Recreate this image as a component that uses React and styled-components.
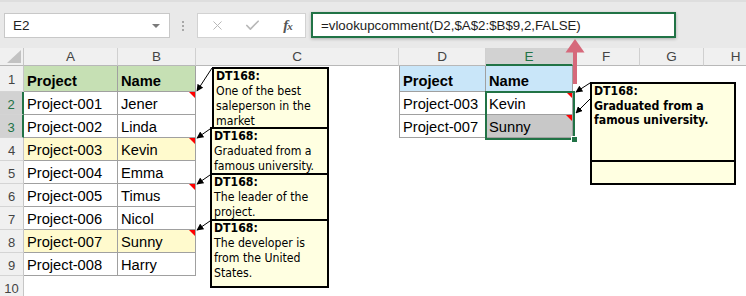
import React from "react";
import styled, { createGlobalStyle, css } from "styled-components";
import { X, Check } from "lucide-react";

const GREEN = "#217346";

const GlobalStyle = createGlobalStyle`
  html, body { margin: 0; padding: 0; background: #fff; overflow: hidden; }
  body { font-family: "Liberation Sans", Arial, sans-serif; }
`;

const Page = styled.div`
  position: relative;
  width: 746px;
  height: 296px;
  overflow: hidden;
  background: #fff;
`;

/* ---------- formula bar ---------- */
const FormulaBar = styled.div`
  display: flex;
  align-items: flex-start;
  height: 48px;
  box-sizing: border-box;
  padding: 11px 0 0 4px;
  background: #e9e9e9;
  border-top: 2px solid #dedede;
`;

const NameBox = styled.div`
  width: 166px;
  height: 25px;
  box-sizing: border-box;
  background: #fff;
  border: 1px solid #c8c8c8;
  display: flex;
  align-items: center;
  justify-content: space-between;
  padding: 0 9px 0 8px;
  font-size: 13.5px;
  color: #222;
`;

const Caret = styled.span`
  width: 0;
  height: 0;
  border-left: 4px solid transparent;
  border-right: 4px solid transparent;
  border-top: 4px solid #7a7a7a;
`;

const Grip = styled.div`
  display: flex;
  flex-direction: column;
  gap: 2px;
  margin: 8px 13px 0 12px;
  span {
    width: 2px;
    height: 2px;
    background: #a8a8a8;
  }
`;

const ButtonBox = styled.div`
  width: 109px;
  height: 25px;
  box-sizing: border-box;
  background: #fff;
  border: 1px solid #d2d2d2;
  display: flex;
  align-items: center;
  padding-left: 2px;
`;

const IconSlot = styled.div`
  width: 35px;
  display: flex;
  justify-content: center;
  align-items: center;
  color: ${(p) => p.$color || "#b8b8b8"};
`;

const Fx = styled.span`
  font-family: "Liberation Serif", "Times New Roman", serif;
  font-style: italic;
  font-weight: bold;
  font-size: 15px;
  color: #555;
  letter-spacing: -1px;
  small {
    font-size: 11px;
  }
`;

const FormulaInput = styled.div`
  margin-left: 5px;
  margin-top: -1px;
  width: 365px;
  height: 26px;
  box-sizing: border-box;
  border: 2px solid ${GREEN};
  background: #fff;
  box-shadow: 0 1px 3px rgba(0, 0, 0, 0.25);
  display: flex;
  align-items: center;
  padding-left: 8px;
  font-size: 13.3px;
  color: #1e1e1e;
  white-space: nowrap;
`;

/* ---------- sheet grid ---------- */
const Sheet = styled.div`
  display: grid;
  grid-template-columns: 24px 94px 78px 203px 87px 87px 67px 64px 64px;
  grid-template-rows: 18px 26px repeat(9, 23px);
`;

const Corner = styled.div`
  background: #f0f0f0;
  border-right: 1px solid #c6c6c6;
  border-bottom: 1px solid #b8b8b8;
  box-sizing: border-box;
  display: flex;
  align-items: flex-end;
  justify-content: flex-end;
  padding: 0 2px 2px 0;
  &::before {
    content: "";
    width: 0;
    height: 0;
    border-left: 14px solid transparent;
    border-bottom: 13px solid #c2c2c2;
  }
`;

const ColHead = styled.div`
  box-sizing: border-box;
  background: ${(p) => (p.$active ? "#d2d2d2" : "#f0f0f0")};
  color: ${(p) => (p.$active ? GREEN : "#444")};
  border-right: 1px solid #d0d0d0;
  border-bottom: ${(p) => (p.$active ? `2px solid ${GREEN}` : "1px solid #b8b8b8")};
  display: flex;
  align-items: center;
  justify-content: center;
  font-size: 13.5px;
  padding-top: ${(p) => (p.$active ? "1px" : "0")};
`;

const RowHead = styled.div`
  box-sizing: border-box;
  background: ${(p) => (p.$active ? "#d2d2d2" : "#f0f0f0")};
  color: ${(p) => (p.$active ? GREEN : "#444")};
  border-right: ${(p) => (p.$active ? `2px solid ${GREEN}` : "1px solid #c6c6c6")};
  border-bottom: 1px solid #d4d4d4;
  display: flex;
  align-items: center;
  justify-content: center;
  font-size: 13px;
  padding-top: 2px;
`;

const TONES = {
  green: "#c6e0b4",
  blue: "#c9e6f9",
  yellow: "#fffacd",
  gray: "#c8c8c8",
  none: "#fff",
};

const Cell = styled.div`
  position: relative;
  box-sizing: border-box;
  background: ${(p) => TONES[p.$tone || "none"]};
  display: flex;
  align-items: flex-end;
  padding: 0 3px 1px 3px;
  font-size: 14.7px;
  line-height: 17px;
  color: #000;
  font-weight: ${(p) => (p.$bold ? "bold" : "normal")};
  white-space: nowrap;
  ${(p) =>
    p.$table &&
    css`
      border-right: 1px solid #a0a0a0;
      border-bottom: 1px solid #a0a0a0;
    `}
  ${(p) =>
    p.$left &&
    css`
      border-left: 1px solid #a0a0a0;
    `}
  ${(p) =>
    p.$note &&
    css`
      &::after {
        content: "";
        position: absolute;
        top: 0;
        right: 0;
        width: 0;
        height: 0;
        border-left: 6px solid transparent;
        border-top: 6px solid #ff0000;
      }
    `}
`;

/* ---------- overlays ---------- */
const Selection = styled.div`
  position: absolute;
  left: 485px;
  top: 91px;
  width: 90px;
  height: 49px;
  box-sizing: border-box;
  border: 2px solid ${GREEN};
  pointer-events: none;
  &::after {
    content: "";
    position: absolute;
    right: -5px;
    bottom: -5px;
    width: 5px;
    height: 5px;
    background: ${GREEN};
    border: 1px solid #fff;
  }
`;

const Note = styled.div`
  position: absolute;
  left: ${(p) => p.$x}px;
  top: ${(p) => p.$y}px;
  width: ${(p) => p.$w}px;
  height: ${(p) => p.$h}px;
  box-sizing: border-box;
  background: #ffffe1;
  border: 2px solid #000;
  display: flex;
  flex-direction: column;
  padding: 0 0 0 2px;
  font-family: "DejaVu Sans Condensed", "DejaVu Sans", Tahoma, sans-serif;
  font-stretch: condensed;
  font-size: 12.2px;
  line-height: ${(p) => (p.$lh ? p.$lh : 15)}px;
  color: #000;
`;

const NoteBody = styled.div`
  flex: 1;
  font-weight: ${(p) => (p.$bold ? "bold" : "normal")};
`;

const NoteLine = styled.div`
  white-space: nowrap;
  font-weight: ${(p) => (p.$bold ? "bold" : "inherit")};
`;

const NoteFooter = styled.div`
  height: 21px;
  margin-left: -2px;
  border-top: 2px solid #000;
`;

const Overlay = styled.svg`
  position: absolute;
  left: 0;
  top: 0;
  pointer-events: none;
`;

/* ---------- data ---------- */
const COLS = ["A", "B", "C", "D", "E", "F", "G", "H"];

const tableA = [
  ["Project", "Name"],
  ["Project-001", "Jener"],
  ["Project-002", "Linda"],
  ["Project-003", "Kevin"],
  ["Project-004", "Emma"],
  ["Project-005", "Timus"],
  ["Project-006", "Nicol"],
  ["Project-007", "Sunny"],
  ["Project-008", "Harry"],
];

const tableD = [
  ["Project", "Name"],
  ["Project-003", "Kevin"],
  ["Project-007", "Sunny"],
];

function cellProps(row, col) {
  if ((col === "A" || col === "B") && row <= 9) {
    const text = tableA[row - 1][col === "A" ? 0 : 1];
    let tone = "none";
    if (row === 1) tone = "green";
    else if (row === 4 || row === 8) tone = "yellow";
    return {
      text,
      $table: true,
      $tone: tone,
      $bold: row === 1,
      $note: col === "B" && [2, 4, 6, 8].includes(row),
    };
  }
  if ((col === "D" || col === "E") && row <= 3) {
    const text = tableD[row - 1][col === "D" ? 0 : 1];
    let tone = "none";
    if (row === 1) tone = "blue";
    else if (row === 3 && col === "E") tone = "gray";
    return {
      text,
      $table: true,
      $left: col === "D",
      $tone: tone,
      $bold: row === 1,
      $note: col === "E" && row >= 2,
    };
  }
  return { text: "" };
}

const notes = [
  { x: 212, y: 67, w: 117, h: 62, lines: ["One of the best", "saleperson in the", "market"] },
  { x: 210, y: 127, w: 119, h: 48, lines: ["Graduated from a", "famous university."] },
  { x: 210, y: 173, w: 119, h: 48, lines: ["The leader of the", "project."] },
  { x: 210, y: 219, w: 119, h: 69, lines: ["The developer is", "from the United", "States."] },
];

const leaders = [
  [212, 68, 197, 91],
  [210, 129, 197, 138],
  [210, 175, 197, 184],
  [210, 221, 197, 230],
  [590, 83, 576, 92],
  [590, 99, 576, 113],
];

export default function App() {
  const rows = Array.from({ length: 10 }, (_, i) => i + 1);
  return (
    <Page>
      <GlobalStyle />
      <FormulaBar>
        <NameBox>
          <span>E2</span>
          <Caret />
        </NameBox>
        <Grip>
          <span />
          <span />
          <span />
        </Grip>
        <ButtonBox>
          <IconSlot>
            <X size={15} strokeWidth={1.6} />
          </IconSlot>
          <IconSlot>
            <Check size={17} strokeWidth={2.4} />
          </IconSlot>
          <IconSlot>
            <Fx>
              f<small>x</small>
            </Fx>
          </IconSlot>
        </ButtonBox>
        <FormulaInput>=vlookupcomment(D2,$A$2:$B$9,2,FALSE)</FormulaInput>
      </FormulaBar>

      <Sheet>
        <Corner />
        {COLS.map((c) => (
          <ColHead key={c} $active={c === "E"}>
            {c}
          </ColHead>
        ))}
        {rows.map((r) => (
          <React.Fragment key={r}>
            <RowHead $active={r === 2 || r === 3}>{r}</RowHead>
            {COLS.map((c) => {
              const { text, ...rest } = cellProps(r, c);
              return (
                <Cell key={c} {...rest}>
                  {text}
                </Cell>
              );
            })}
          </React.Fragment>
        ))}
      </Sheet>

      <Selection />

      {notes.map((n, i) => (
        <Note key={i} $x={n.x} $y={n.y} $w={n.w} $h={n.h}>
          <NoteBody>
            <NoteLine $bold>DT168:</NoteLine>
            {n.lines.map((l) => (
              <NoteLine key={l}>{l}</NoteLine>
            ))}
          </NoteBody>
        </Note>
      ))}

      <Note $x={590} $y={82} $w={146} $h={103} $lh={14.5}>
        <NoteBody $bold>
          <NoteLine>DT168:</NoteLine>
          <NoteLine>Graduated from a</NoteLine>
          <NoteLine>famous university.</NoteLine>
        </NoteBody>
        <NoteFooter />
      </Note>

      <Overlay width="746" height="296" viewBox="0 0 746 296">
        <defs>
          <marker id="tip" viewBox="0 0 10 10" refX="9" refY="5" markerWidth="7" markerHeight="7" orient="auto">
            <path d="M0 0 L10 5 L0 10 z" fill="#000" />
          </marker>
        </defs>
        {leaders.map(([x1, y1, x2, y2], i) => (
          <line key={i} x1={x1} y1={y1} x2={x2} y2={y2} stroke="#000" strokeWidth="1" markerEnd="url(#tip)" />
        ))}
        <line x1="575" y1="84" x2="575" y2="48" stroke="#d6697b" strokeWidth="4" />
        <polygon points="565.5,52.5 575,39 584.5,52.5" fill="#d6697b" />
      </Overlay>
    </Page>
  );
}
